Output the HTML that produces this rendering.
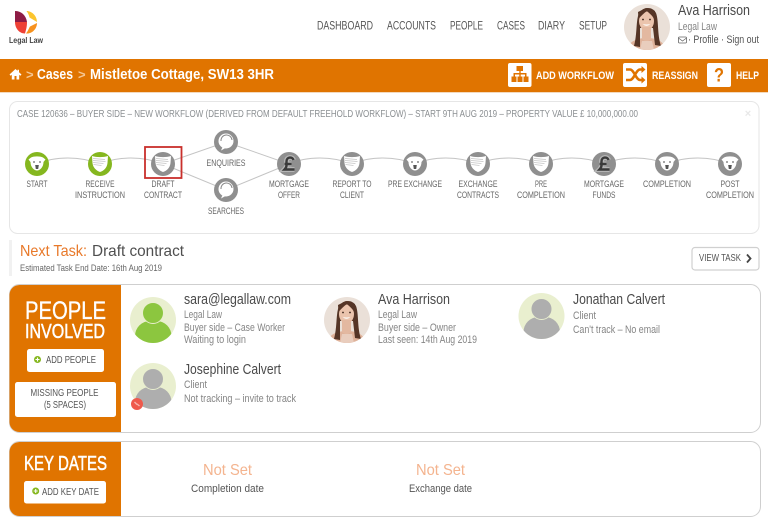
<!DOCTYPE html>
<html><head><meta charset="utf-8"><title>Legal Law</title>
<style>
html,body{margin:0;padding:0;background:#fff;width:768px;height:521px;overflow:hidden}
svg{display:block;filter:blur(.35px)}
text{font-family:"Liberation Sans",sans-serif;fill:#555}
.nav{font-size:11.5px;fill:#555}
.g{font-size:10.8px;fill:#858585}
.nm{font-size:15px;fill:#4a4a4a}
.l{font-size:9.5px;fill:#666;text-anchor:middle}
.w{fill:#fff;font-weight:bold}
</style></head><body>
<svg width="768" height="521" viewBox="0 0 768 521" xmlns="http://www.w3.org/2000/svg">
<defs>
<symbol id="pig" viewBox="-12 -12 24 24"><path d="M-8.500-4.500-6-6.500C-3-8 3-8 6-6.500L8.500-4.500 6.500-2C6.500 3 3 6.500 0 6.500-3 6.500-6.500 3-6.500-2Z" fill="#fff"/><path d="M-1.800 1H1.800L1.200 5H-1.200Z" fill="#555"/><circle cx="-3" cy="-2" r=".9" fill="#666"/><circle cx="3" cy="-2" r=".9" fill="#666"/></symbol>
<symbol id="doc" viewBox="-12 -12 24 24"><path d="M-8-8C-3-6.500 3-6.500 8-8L7.500-1C7 4 3.500 7 0 8-4 6.500-7 3.500-7.500-1Z" fill="#fff"/><path d="M-7-5.500 5-4.500M-7-3.500 5.500-2.500M-7-1.500 3.500-.5M-6.500.5 1.500 1.500" stroke="#c4c4c4" stroke-width=".8"/></symbol>
<symbol id="chat" viewBox="-12 -12 24 24"><circle cx="0" cy="-1" r="7.500" fill="#fff"/><path d="M-5-1A5.500 5.500 0 0 1 6-2" fill="none" stroke="#888" stroke-width="1"/><path d="M-3 4-5 8.500-.5 6Z" fill="#fff"/></symbol>
<symbol id="pound" viewBox="-12 -12 24 24"><path d="M4.500-4C3.500-7.500-2.500-7.500-2.500-2.500V1.500C-2.500 3-3 4-4.500 5.500H5.500M-4.500 0H2.500" fill="none" stroke="#b5b5b5" stroke-width="5"/><path d="M4.500-4C3.500-7.500-2.500-7.500-2.500-2.500V1.500C-2.500 3-3 4-4.500 5.500H5.500M-4.500 0H2.500" fill="none" stroke="#3a3a3a" stroke-width="2.400"/></symbol>
<symbol id="ph" viewBox="0 0 46 46"><clipPath id="c"><circle cx="23" cy="23" r="23"/></clipPath><g clip-path="url(#c)"><rect width="46" height="46" fill="#eae0d8"/><path d="M3 46C5 37 13 34 23 34 33 34 39 37 43 46Z" fill="#dfb29a"/><path d="M10 42C13 31 12 20 14 12 16 3 28 1 32 9 35 17 33 30 37 42L31 41 29 24H16L16 43Z" fill="#553526"/><ellipse cx="22.500" cy="17" rx="7.500" ry="9.500" fill="#ebc4ad"/><path d="M18 23H27V35L22.500 38 18 35Z" fill="#e3b8a0"/><path d="M14.500 15C17 12 20 9 23 7 26 10 29 12 30.500 16L31 7 22 4 14 8Z" fill="#553526"/><circle cx="19" cy="15.500" r=".9" fill="#3a2318"/><circle cx="26" cy="15.500" r=".9" fill="#3a2318"/><path d="M18.500 20Q22.500 23.500 26.500 20Q22.500 21 18.500 20Z" fill="#fff"/><path d="M16 46 18 37H28L30 46Z" fill="#e9cdbd"/></g></symbol>
<clipPath id="a1"><circle cx="153" cy="320" r="23"/></clipPath>
<clipPath id="a2"><circle cx="153" cy="386" r="23"/></clipPath>
<clipPath id="a3"><circle cx="541.500" cy="316" r="23"/></clipPath>
</defs>

<!-- logo -->
<path d="M15 11C21 11 26 15 27 22H15Z" fill="#8e1c45"/>
<path d="M15 22H27C27 27 26 30 25 33.500 19 33.500 15 28 15 22Z" fill="#ee4136"/>
<path d="M26.500 11C32 11 37 16 37 22L29.500 17.500C29 15 28 13 26.500 11Z" fill="#fcc52e"/>
<path d="M37 23C37 29 32 34 26 33.500 28 31 29 28 30 26.500Z" fill="#f7921e"/>
<text x="9" y="43" font-size="8.500" font-weight="bold" textLength="34" lengthAdjust="spacingAndGlyphs" style="fill:#444">Legal Law</text>

<!-- nav -->
<text class="nav" x="317" y="29.500" textLength="56" lengthAdjust="spacingAndGlyphs">DASHBOARD</text>
<text class="nav" x="387" y="29.500" textLength="49" lengthAdjust="spacingAndGlyphs">ACCOUNTS</text>
<text class="nav" x="450" y="29.500" textLength="33" lengthAdjust="spacingAndGlyphs">PEOPLE</text>
<text class="nav" x="497" y="29.500" textLength="28" lengthAdjust="spacingAndGlyphs">CASES</text>
<text class="nav" x="538" y="29.500" textLength="27" lengthAdjust="spacingAndGlyphs">DIARY</text>
<text class="nav" x="579" y="29.500" textLength="28" lengthAdjust="spacingAndGlyphs">SETUP</text>

<!-- header avatar -->
<use href="#ph" x="624" y="4" width="46" height="46"/>
<text x="678" y="15" font-size="15" textLength="72" lengthAdjust="spacingAndGlyphs" style="fill:#4a4a4a">Ava Harrison</text>
<text class="g" x="678" y="30" textLength="39" lengthAdjust="spacingAndGlyphs">Legal Law</text>
<rect x="678.500" y="37" width="8" height="6" rx="1" fill="none" stroke="#666" stroke-width=".8"/><path d="M678.500 38 682.500 41 686.500 38" fill="none" stroke="#666" stroke-width=".7"/>
<text x="688" y="43" font-size="10.800" textLength="71" lengthAdjust="spacingAndGlyphs" style="fill:#555">· Profile · Sign out</text>

<!-- orange bar -->
<rect x="0" y="59" width="768" height="33" fill="#e07400"/>
<rect x="0" y="92" width="768" height="1" fill="#f3d9bd"/>
<path d="M15.500 69 9.500 74.500 10.700 75.700 11.800 74.700V79.500H14.500V76H16.500V79.500H19.200V74.700L20.300 75.700 21.500 74.500 19 72.200V69.800H17.500V70.900Z" fill="#fff"/>
<text x="26" y="79" font-size="13" font-weight="bold" style="fill:#f5c794">&gt;</text>
<text class="w" x="37" y="79" font-size="14.500" textLength="36" lengthAdjust="spacingAndGlyphs" style="fill:#fff">Cases</text>
<text x="78" y="79" font-size="13" font-weight="bold" style="fill:#f5c794">&gt;</text>
<text class="w" x="90" y="79" font-size="14.500" textLength="184" lengthAdjust="spacingAndGlyphs" style="fill:#fff">Mistletoe Cottage, SW13 3HR</text>

<rect x="508" y="63" width="23.500" height="24" rx="2" fill="#fff"/>
<path d="M516.500 66H523V71H520.700V73H526.500V76.500H528.500V82H523.500V76.500H525V74.500H520.700V76.500H522.500V82H517.500V76.500H519.300V74.500H515V76.500H516.500V82H511.500V76.500H513.500V73H519.300V71H516.500Z" fill="#e07400"/>
<text class="w" x="536" y="79" font-size="11" textLength="78" lengthAdjust="spacingAndGlyphs" style="fill:#fff">ADD WORKFLOW</text>
<rect x="623" y="63" width="24" height="24" rx="2" fill="#fff"/>
<path d="M626 69.500H630C634 69.500 636 80 640 80H642M626 80H630C634 80 636 69.500 640 69.500H642" fill="none" stroke="#e07400" stroke-width="2.600"/>
<path d="M641.500 66 645.500 69.500 641.500 73ZM641.500 76.500 645.500 80 641.500 83.500Z" fill="#e07400"/>
<text class="w" x="652" y="79" font-size="11" textLength="46" lengthAdjust="spacingAndGlyphs" style="fill:#fff">REASSIGN</text>
<rect x="707" y="63" width="24" height="24" rx="2" fill="#fff"/>
<text x="719" y="81.500" font-size="19" font-weight="bold" text-anchor="middle" textLength="10" lengthAdjust="spacingAndGlyphs" style="fill:#e07400">?</text>
<text class="w" x="736" y="79" font-size="11" textLength="23" lengthAdjust="spacingAndGlyphs" style="fill:#fff">HELP</text>

<!-- workflow panel -->
<rect x="9.500" y="101.500" width="749.500" height="132" rx="8" fill="#fff" stroke="#e6e6e6"/>
<text x="17" y="117" font-size="10" textLength="621" lengthAdjust="spacingAndGlyphs" style="fill:#8b8f92">CASE 120636 – BUYER SIDE – NEW WORKFLOW (DERIVED FROM DEFAULT FREEHOLD WORKFLOW) – START 9TH AUG 2019 – PROPERTY VALUE £ 10,000,000.00</text>
<text x="748" y="117" font-size="11" text-anchor="middle" font-weight="bold" style="fill:#e8e8e8">×</text>

<g fill="none" stroke="#c4c4c4" stroke-width="1">
<path d="M37 164C55 156 80 156 100 164C118 156 143 156 163 164"/>
<path d="M163 164 226 142 289 164 226 190 163 164"/>
<path d="M289 164C307 156 332 156 352 164C370 156 395 156 415 164C433 156 458 156 478 164C496 156 521 156 541 164C559 156 584 156 604 164C622 156 647 156 667 164C685 156 710 156 730 164"/>
</g>
<rect x="145" y="147" width="36.500" height="31" fill="none" stroke="#c9302c" stroke-width="1.800"/>
<g fill="#85b71f"><circle cx="37" cy="164" r="12"/><circle cx="100" cy="164" r="12"/></g>
<g fill="#8f8f8f"><circle cx="163" cy="164" r="12"/><circle cx="226" cy="142" r="12"/><circle cx="226" cy="190" r="12"/><circle cx="289" cy="164" r="12"/><circle cx="352" cy="164" r="12"/><circle cx="415" cy="164" r="12"/><circle cx="478" cy="164" r="12"/><circle cx="541" cy="164" r="12"/><circle cx="604" cy="164" r="12"/><circle cx="667" cy="164" r="12"/><circle cx="730" cy="164" r="12"/></g>
<use href="#pig" x="25" y="152" width="24" height="24"/>
<use href="#doc" x="88" y="152" width="24" height="24"/>
<use href="#doc" x="151" y="152" width="24" height="24"/>
<use href="#chat" x="214" y="130" width="24" height="24"/>
<use href="#chat" x="214" y="178" width="24" height="24"/>
<use href="#pound" x="277" y="152" width="24" height="24"/>
<use href="#doc" x="340" y="152" width="24" height="24"/>
<use href="#pig" x="403" y="152" width="24" height="24"/>
<use href="#doc" x="466" y="152" width="24" height="24"/>
<use href="#doc" x="529" y="152" width="24" height="24"/>
<use href="#pound" x="592" y="152" width="24" height="24"/>
<use href="#pig" x="655" y="152" width="24" height="24"/>
<use href="#pig" x="718" y="152" width="24" height="24"/>

<text class="l" x="37" y="187" textLength="21" lengthAdjust="spacingAndGlyphs">START</text>
<text class="l" x="100" y="187" textLength="29" lengthAdjust="spacingAndGlyphs">RECEIVE</text><text class="l" x="100" y="198" textLength="50" lengthAdjust="spacingAndGlyphs">INSTRUCTION</text>
<text class="l" x="163" y="187" textLength="23" lengthAdjust="spacingAndGlyphs">DRAFT</text><text class="l" x="163" y="198" textLength="38" lengthAdjust="spacingAndGlyphs">CONTRACT</text>
<text class="l" x="226" y="166" textLength="39" lengthAdjust="spacingAndGlyphs">ENQUIRIES</text>
<text class="l" x="226" y="214" textLength="36" lengthAdjust="spacingAndGlyphs">SEARCHES</text>
<text class="l" x="289" y="187" textLength="40" lengthAdjust="spacingAndGlyphs">MORTGAGE</text><text class="l" x="289" y="198" textLength="22" lengthAdjust="spacingAndGlyphs">OFFER</text>
<text class="l" x="352" y="187" textLength="39" lengthAdjust="spacingAndGlyphs">REPORT TO</text><text class="l" x="352" y="198" textLength="24" lengthAdjust="spacingAndGlyphs">CLIENT</text>
<text class="l" x="415" y="187" textLength="54" lengthAdjust="spacingAndGlyphs">PRE EXCHANGE</text>
<text class="l" x="478" y="187" textLength="39" lengthAdjust="spacingAndGlyphs">EXCHANGE</text><text class="l" x="478" y="198" textLength="42" lengthAdjust="spacingAndGlyphs">CONTRACTS</text>
<text class="l" x="541" y="187" textLength="12" lengthAdjust="spacingAndGlyphs">PRE</text><text class="l" x="541" y="198" textLength="48" lengthAdjust="spacingAndGlyphs">COMPLETION</text>
<text class="l" x="604" y="187" textLength="40" lengthAdjust="spacingAndGlyphs">MORTGAGE</text><text class="l" x="604" y="198" textLength="23" lengthAdjust="spacingAndGlyphs">FUNDS</text>
<text class="l" x="667" y="187" textLength="48" lengthAdjust="spacingAndGlyphs">COMPLETION</text>
<text class="l" x="730" y="187" textLength="19" lengthAdjust="spacingAndGlyphs">POST</text><text class="l" x="730" y="198" textLength="48" lengthAdjust="spacingAndGlyphs">COMPLETION</text>

<!-- next task -->
<rect x="9" y="240" width="3" height="36" fill="#f1f1f1"/>
<text x="20" y="256" font-size="16" textLength="67" lengthAdjust="spacingAndGlyphs" style="fill:#e8792a">Next Task:</text>
<text x="92" y="256" font-size="16" textLength="92" lengthAdjust="spacingAndGlyphs" style="fill:#4f4f4f">Draft contract</text>
<text x="20" y="271" font-size="9.300" textLength="142" lengthAdjust="spacingAndGlyphs" style="fill:#666">Estimated Task End Date: 16th Aug 2019</text>
<rect x="692" y="247.500" width="67" height="22.500" rx="3" fill="#fff" stroke="#d0d0d0" stroke-width="1.200"/>
<text x="699" y="261" font-size="10" textLength="42" lengthAdjust="spacingAndGlyphs" style="fill:#555">VIEW TASK</text>
<path d="M747 254.500 750.500 258.500 747 262.500" fill="none" stroke="#444" stroke-width="1.800"/>

<!-- people card -->
<rect x="9.500" y="284.500" width="751" height="148" rx="10" fill="#fff" stroke="#cfcfcf"/>
<path d="M121 285V432H19.500A10 10 0 0 1 9.500 422V295A10 10 0 0 1 19.500 285Z" fill="#e07400"/>
<text x="25" y="319" font-size="25" textLength="81" lengthAdjust="spacingAndGlyphs" style="fill:#fff;stroke:#fff;stroke-width:.35">PEOPLE</text>
<text x="25" y="338" font-size="20" textLength="80" lengthAdjust="spacingAndGlyphs" style="fill:#fff;stroke:#fff;stroke-width:.5">INVOLVED</text>
<rect x="27" y="349" width="77" height="23" rx="2.500" fill="#fff"/>
<circle cx="37.500" cy="359.500" r="3.500" fill="#85b71f"/><path d="M35.500 359.500H39.500M37.500 357.500V361.500" stroke="#fff" stroke-width="1.100"/>
<text x="46" y="363" font-size="10" textLength="50" lengthAdjust="spacingAndGlyphs" style="fill:#555">ADD PEOPLE</text>
<rect x="15" y="382" width="101" height="35" rx="2.500" fill="#fff"/>
<text x="64.500" y="396" font-size="10" text-anchor="middle" textLength="68" lengthAdjust="spacingAndGlyphs" style="fill:#555">MISSING PEOPLE</text>
<text x="65" y="408" font-size="10" text-anchor="middle" textLength="42" lengthAdjust="spacingAndGlyphs" style="fill:#555">(5 SPACES)</text>

<!-- people avatars -->
<circle cx="153" cy="320" r="23" fill="#e9efcf"/>
<rect x="135" y="321" width="36.500" height="34" rx="15" fill="#8cc63f" clip-path="url(#a1)"/>
<circle cx="153" cy="313" r="10.500" fill="#8cc63f" stroke="#e9efcf"/>
<circle cx="153" cy="386" r="23" fill="#e9efcf"/>
<rect x="135" y="387" width="36.500" height="34" rx="15" fill="#aeaeae" clip-path="url(#a2)"/>
<circle cx="153" cy="379" r="10.500" fill="#aeaeae" stroke="#e9efcf"/>
<circle cx="137" cy="404" r="6" fill="#ef5a4c"/>
<path d="M134.500 402 137 404.500M137 404 139.500 406" stroke="#f6b5ad" stroke-width="1.400"/>
<circle cx="541.500" cy="316" r="23" fill="#e9efcf"/>
<rect x="523.500" y="317" width="36.500" height="34" rx="15" fill="#aeaeae" clip-path="url(#a3)"/>
<circle cx="541.500" cy="309" r="10.500" fill="#aeaeae" stroke="#e9efcf"/>
<use href="#ph" x="324" y="297" width="46" height="46"/>

<text class="nm" x="184" y="304" textLength="107" lengthAdjust="spacingAndGlyphs">sara@legallaw.com</text>
<text class="g" x="184" y="318" textLength="38" lengthAdjust="spacingAndGlyphs">Legal Law</text>
<text class="g" x="184" y="331" textLength="101" lengthAdjust="spacingAndGlyphs">Buyer side – Case Worker</text>
<text class="g" x="184" y="343" textLength="62" lengthAdjust="spacingAndGlyphs">Waiting to login</text>
<text class="nm" x="184" y="374" textLength="97" lengthAdjust="spacingAndGlyphs">Josephine Calvert</text>
<text class="g" x="184" y="388" textLength="23" lengthAdjust="spacingAndGlyphs">Client</text>
<text class="g" x="184" y="402" textLength="112" lengthAdjust="spacingAndGlyphs">Not tracking – invite to track</text>
<text class="nm" x="378" y="304" textLength="72" lengthAdjust="spacingAndGlyphs">Ava Harrison</text>
<text class="g" x="378" y="318" textLength="39" lengthAdjust="spacingAndGlyphs">Legal Law</text>
<text class="g" x="378" y="331" textLength="78" lengthAdjust="spacingAndGlyphs">Buyer side – Owner</text>
<text class="g" x="378" y="343" textLength="99" lengthAdjust="spacingAndGlyphs">Last seen: 14th Aug 2019</text>
<text class="nm" x="573" y="304" textLength="92" lengthAdjust="spacingAndGlyphs">Jonathan Calvert</text>
<text class="g" x="573" y="319" textLength="23" lengthAdjust="spacingAndGlyphs">Client</text>
<text class="g" x="573" y="333" textLength="87" lengthAdjust="spacingAndGlyphs">Can't track – No email</text>

<!-- key dates -->
<rect x="9.500" y="441.500" width="751" height="75" rx="10" fill="#fff" stroke="#cfcfcf"/>
<path d="M121 442V516H19.500A10 10 0 0 1 9.500 506V452A10 10 0 0 1 19.500 442Z" fill="#e07400"/>
<text x="24" y="470" font-size="20.500" textLength="83" lengthAdjust="spacingAndGlyphs" style="fill:#fff;stroke:#fff;stroke-width:.5">KEY DATES</text>
<rect x="24" y="481" width="82" height="22.500" rx="2.500" fill="#fff"/>
<circle cx="35.700" cy="491" r="3.500" fill="#85b71f"/><path d="M33.700 491H37.700M35.700 489V493" stroke="#fff" stroke-width="1.100"/>
<text x="42" y="495" font-size="10" textLength="57" lengthAdjust="spacingAndGlyphs" style="fill:#555">ADD KEY DATE</text>
<text x="203" y="475" font-size="16" textLength="49" lengthAdjust="spacingAndGlyphs" style="fill:#f4b48f">Not Set</text>
<text x="191" y="492" font-size="11" textLength="73" lengthAdjust="spacingAndGlyphs" style="fill:#555">Completion date</text>
<text x="416" y="475" font-size="16" textLength="49" lengthAdjust="spacingAndGlyphs" style="fill:#f4b48f">Not Set</text>
<text x="409" y="492" font-size="11" textLength="63" lengthAdjust="spacingAndGlyphs" style="fill:#555">Exchange date</text>
</svg>
</body></html>
